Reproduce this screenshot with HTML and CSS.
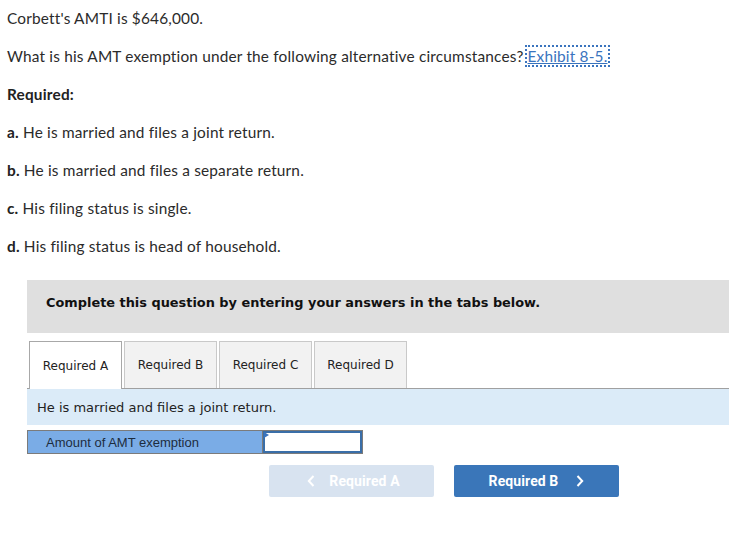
FILE: index.html
```html
<!DOCTYPE html>
<html lang="en">
<head>
    <meta charset="UTF-8">
    <title>AMT exemption</title>
    <link rel="stylesheet" href="styles.css">
</head>
<body>
    <div class="question">
        <p>Corbett's AMTI is $646,000.</p>
        <p>What is his AMT exemption under the following alternative circumstances?<a class="exhibit" href="#">Exhibit 8-5.</a></p>
        <p class="req-title">Required:</p>
        <p><b>a.</b> He is married and files a joint return.</p>
        <p><b>b.</b> He is married and files a separate return.</p>
        <p><b>c.</b> His filing status is single.</p>
        <p><b>d.</b> His filing status is head of household.</p>
    </div>

    <div class="work">
        <div class="notice">Complete this question by entering your answers in the tabs below.</div>

        <div class="tabs">
            <div class="tab active">Required A</div>
            <div class="tab">Required B</div>
            <div class="tab">Required C</div>
            <div class="tab">Required D</div>
        </div>

        <div class="tab-desc">He is married and files a joint return.</div>

        <div class="answer-row">
            <div class="answer-label">Amount of AMT exemption</div>
            <div class="answer-input"><div class="answer-field"></div></div>
        </div>

        <div class="nav">
            <button class="nav-btn prev">
                <svg viewBox="0 0 8 12"><path d="M6.5 1 L1.8 6 L6.5 11"/></svg>
                <span>Required A</span>
            </button>
            <button class="nav-btn next">
                <span>Required B</span>
                <svg viewBox="0 0 8 12"><path d="M1.5 1 L6.2 6 L1.5 11"/></svg>
            </button>
        </div>
    </div>
</body>
</html>
```

FILE: styles.css
```css
* {
    margin: 0;
    padding: 0;
    box-sizing: border-box;
}

body {
    font-family: Lato, 'Open Sans', sans-serif;
    color: #2b2b2b;
    background: #fff;
    overflow: hidden;
}

.question {
    padding: 8px 0 0 7px;
    font-size: 15.4px;
    letter-spacing: 0.18px;
}

.question p {
    line-height: 20px;
    margin-bottom: 18px;
}

.question b,
.req-title {
    font-weight: 700;
    color: #222;
}

.exhibit {
    color: #3a74be;
    outline: 2px dotted #3a74be;
    outline-offset: 0;
    margin-left: 3px;
    padding: 0 1px;
}

.work {
    padding-left: 27px;
    margin-top: 24px;
}

.notice {
    background: #dfdfdf;
    height: 53px;
    padding: 0 0 8px 19px;
    display: flex;
    align-items: center;
    font-family: 'DejaVu Sans', Verdana, sans-serif;
    font-weight: 700;
    font-size: 12.9px;
    color: #111;
}

.tabs {
    display: flex;
    gap: 2px;
    margin-top: 8px;
    padding-left: 2px;
    border-bottom: 1px solid #a0a0a0;
}

.tab {
    width: 93px;
    height: 47px;
    margin-bottom: -1px;
    display: flex;
    align-items: center;
    justify-content: center;
    background: #f2f2f2;
    border: 1px solid #c9c9c9;
    border-bottom: none;
    font-family: 'DejaVu Sans', Verdana, sans-serif;
    font-size: 12px;
    color: #222;
}

.tab.active {
    background: #fff;
    border-color: #a8a8a8;
    height: 48px;
}

.tab-desc {
    background: #dbebf8;
    height: 36px;
    padding-left: 10px;
    display: flex;
    align-items: center;
    font-family: 'DejaVu Sans', Verdana, sans-serif;
    font-size: 13px;
    color: #222;
}

.answer-row {
    display: flex;
    margin-top: 5px;
    height: 24px;
}

.answer-label {
    width: 235px;
    background: #7aace6;
    border: 1px solid #7b7b7b;
    border-right: none;
    padding-left: 18px;
    display: flex;
    align-items: center;
    font-family: 'Liberation Sans', Arial, sans-serif;
    font-size: 13px;
    color: #1d2c3e;
}

.answer-input {
    width: 101px;
    border: 1px solid #7b7b7b;
}

.answer-field {
    position: relative;
    height: 100%;
    background: #fff;
    border: 2px solid #3a6ea8;
}

.answer-field::before {
    content: '';
    position: absolute;
    top: -1px;
    left: -1px;
    border-top: 3px solid transparent;
    border-bottom: 3px solid transparent;
    border-left: 5px solid #3a74be;
}

.nav {
    display: flex;
    gap: 20px;
    margin: 11px 0 0 242px;
}

.nav-btn {
    width: 165px;
    height: 32px;
    border: none;
    border-radius: 2px;
    display: flex;
    align-items: center;
    justify-content: center;
    gap: 14px;
    font-family: Roboto, sans-serif;
    font-weight: 700;
    font-size: 14px;
    letter-spacing: 0.1px;
    color: #fff;
}

.nav-btn svg {
    width: 8px;
    height: 12px;
    fill: none;
    stroke: #fff;
    stroke-width: 2;
}

.nav-btn.prev {
    background: #d8e3f0;
    padding-left: 4px;
}

.nav-btn.next {
    background: #3a76b9;
    gap: 18px;
}
```
